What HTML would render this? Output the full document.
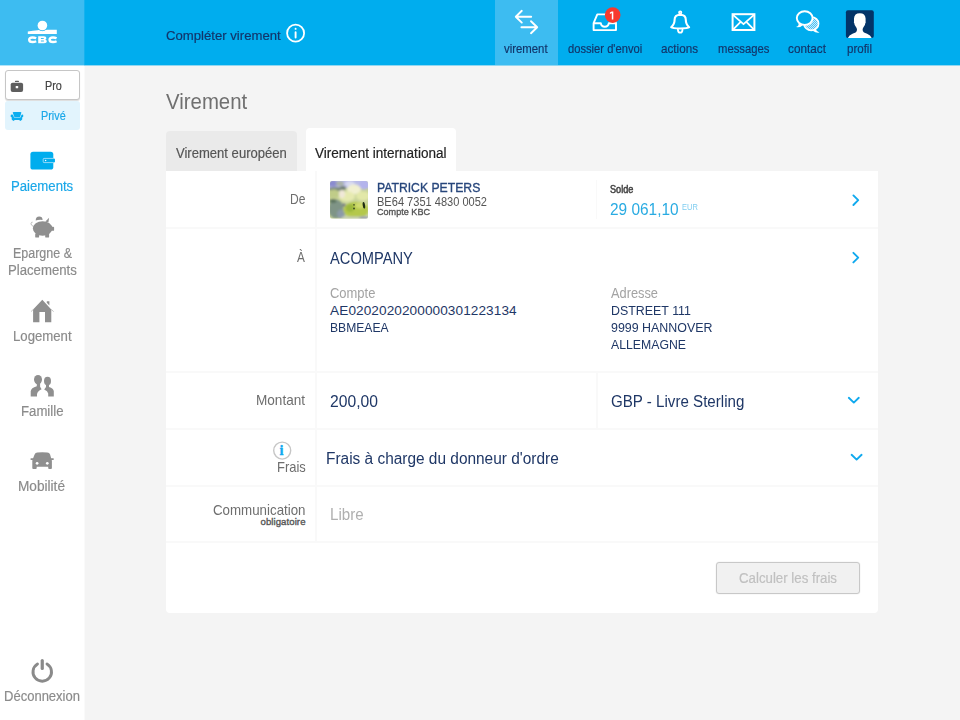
<!DOCTYPE html>
<html lang="fr">
<head>
<meta charset="utf-8">
<title>Virement</title>
<style>
*{box-sizing:border-box;margin:0;padding:0}
html,body{width:960px;height:720px;overflow:hidden}
body{font-family:"Liberation Sans",sans-serif;background:#f4f4f4;color:#1f3766;position:relative}
.a{position:absolute}
.t{position:absolute;white-space:nowrap;line-height:1;transform-origin:0 0}
svg{position:absolute;overflow:visible}
#hdr{position:absolute;left:0;top:0;width:960px;height:65px;background:#00adee}
#logo{position:absolute;left:0;top:0;width:84px;height:65px;background:#3dbcf1}
#navon{position:absolute;left:495px;top:0;width:63px;height:65px;background:#3dbcf1}
#side{position:absolute;left:0;top:65px;width:84px;height:655px;background:#fff}
#card{position:absolute;left:166px;top:171px;width:712px;height:442px;background:#fff;border-radius:0 0 4px 4px}
.hl{position:absolute;left:166px;width:712px;height:2px;background:#f9f9f9}
.vl{position:absolute;width:2px;background:#f9f9f9}
</style>
</head>
<body>
<div id="hdr"><div id="logo"></div><div id="navon"></div></div>
<div id="side"></div>
<div class="a" style="left:84px;top:65px;width:876px;height:1px;background:rgba(0,173,238,.4)"></div><div class="a" style="left:0;top:65px;width:84px;height:1px;background:rgba(61,188,241,.4)"></div><div class="a" style="left:84px;top:0;width:1px;height:65px;background:rgba(61,188,241,.35)"></div><div class="a" style="left:84px;top:66px;width:1px;height:654px;background:rgba(255,255,255,.5)"></div>

<svg style="left:0;top:0" width="85" height="65" viewBox="0 0 85 65">
  <path d="M27.8 34 L27.8 31.5 Q33 30.6 37.6 30.2 Q40 29.8 42.4 31.2 Q44.8 29.8 47.2 29.8 L56.8 29.8 L56.8 34 Z" fill="#fff"/>
  <circle cx="42.4" cy="25.5" r="5.5" fill="#3dbcf1"/>
  <circle cx="42.4" cy="25.5" r="4.8" fill="#fff"/>
  <path d="M36.2 38.3 Q34.5 37.45 32.6 37.45 Q29.2 37.45 29.2 39.75 Q29.2 42.05 32.6 42.05 Q34.5 42.05 36.2 41.2" fill="none" stroke="#fff" stroke-width="2.4"/>
  <path fill-rule="evenodd" fill="#fff" d="M38.2 36.25 H43.8 Q46.4 36.25 46.4 38.1 Q46.4 39.4 45.3 39.7 Q46.8 40 46.8 41.3 Q46.8 43.25 44.0 43.25 H38.2 Z M40.9 37.9 H43.7 V38.9 H40.9 Z M40.9 40.5 H43.9 V41.6 H40.9 Z"/>
  <path d="M56.6 38.3 Q54.9 37.45 53.0 37.45 Q49.6 37.45 49.6 39.75 Q49.6 42.05 53.0 42.05 Q54.9 42.05 56.6 41.2" fill="none" stroke="#fff" stroke-width="2.4"/>
</svg>
<svg style="left:0;top:0" width="960" height="65" viewBox="0 0 960 65" fill="none" stroke="#fff" stroke-width="1.9" stroke-linecap="round" stroke-linejoin="round">
  <!-- info -->
  <circle cx="295.6" cy="33.2" r="8.5" stroke-width="1.8"/>
  <path d="M295.6 32.2 V37.6 M295.6 28.7 V28.9" stroke-width="1.9"/>
  <!-- virement arrows -->
  <path d="M531.2 16.7 H516.2 M521.8 10.8 L515.8 16.7 L521.8 22.6"/>
  <path d="M521.4 27.2 H537 M531 21.2 L537.2 27.2 L531 33.2"/>
  <!-- dossier tray -->
  <path d="M593.6 23.2 L597.3 14.4 H612.3 L616 23.2 V30.1 H593.6 Z M593.6 23.2 H600.8 Q601.2 26.8 604.8 26.8 Q608.4 26.8 608.8 23.2 H616"/>
  <!-- bell -->
  <path d="M671.2 27.2 Q674.6 24.4 674.6 19.8 Q674.6 14.8 680.2 14.7 Q685.8 14.8 685.8 19.8 Q685.8 24.4 689.1 27.2 Q688 28.2 680.2 28.5 Q672.4 28.2 671.2 27.2 Z" stroke-width="2.1"/>
  <circle cx="680.2" cy="12.5" r="1.2" stroke-width="1.7"/>
  <path d="M677.9 29.6 Q678.1 32.7 680.2 32.7 Q682.3 32.7 682.5 29.6" stroke-width="1.8"/>
  <!-- envelope -->
  <rect x="732.6" y="14.2" width="21.8" height="15.8" stroke-width="2" stroke-linejoin="miter"/>
  <path d="M733 14.8 L743.5 24.2 L754 14.8 M733 29.6 L740.4 22.2 M754 29.6 L746.6 22.2" stroke-width="1.8"/>
</svg>
<svg style="left:0;top:0" width="960" height="65" viewBox="0 0 960 65">
  <!-- badge -->
  <circle cx="612.7" cy="15.1" r="7.8" fill="#f73a2e"/>
  <path d="M611.8 11.5 H613.3 V19.5 H611.8 V13.1 L609.9 14 V12.6 Z" fill="#fff"/>
  <!-- contact bubbles -->
  <defs><pattern id="dots" width="2" height="2" patternUnits="userSpaceOnUse"><rect width="2" height="2" fill="#4cc1f3"/><rect width="1" height="1" fill="#c9ecfc"/><rect x="1" y="1" width="1" height="1" fill="#c9ecfc"/></pattern></defs>
  <ellipse cx="811.3" cy="23.7" rx="7.3" ry="6.7" fill="url(#dots)" stroke="#fff" stroke-width="1.6"/>
  <path d="M815.6 29 Q816.6 31.6 819.5 32.5 Q816 33.2 812.8 30.8 Z" fill="#fff"/>
  <ellipse cx="804.7" cy="18.1" rx="7.9" ry="6.8" fill="#00adee" stroke="#fff" stroke-width="1.9"/>
  <path d="M799 23.2 Q798.8 26.2 796 27.1 Q799.8 27.8 802.4 25.4 Z" fill="#fff"/>
  <!-- profile -->
  <rect x="845.9" y="10.3" width="27.9" height="27.7" rx="2" fill="#033468"/>
  <path d="M847.9 38 Q849 35.4 852.5 33.8 L855.6 32.4 Q857 31.6 857 29.8 Q856.9 28 856 27 Q854.4 25.4 854.3 23.2 Q853.6 22.8 854 21.6 V18.6 Q854.3 13.2 859.8 13.2 Q865.3 13.2 865.6 18.6 V21.6 Q866 22.8 865.3 23.2 Q865.2 25.4 863.6 27 Q862.7 28 862.6 29.8 Q862.6 31.6 864 32.4 L867.1 33.8 Q870.6 35.4 871.7 38 Z" fill="#fff"/>
</svg>

<div class="a" style="left:5px;top:70px;width:75px;height:30px;background:#fff;border:1px solid #c6c6c6;border-radius:3px;box-shadow:0 1px 1px rgba(0,0,0,.14)"></div>
<div class="a" style="left:5px;top:101px;width:75px;height:29px;background:#e2f4fd;border-radius:3px"></div>
<svg style="left:0;top:0" width="85" height="720" viewBox="0 0 85 720">
  <!-- briefcase -->
  <g fill="#5e5e5e">
    <rect x="14.9" y="80.7" width="4.1" height="1.4" rx="0.7"/>
    <rect x="10.7" y="82.7" width="12.4" height="9.3" rx="1.9"/>
  </g>
  <rect x="15.7" y="85.9" width="2.5" height="2.4" rx="0.5" fill="#fff"/>
  <!-- sofa -->
  <g fill="#0badef">
    <path d="M12.7 112.6 Q12.9 111.9 13.7 111.9 H20.4 Q21.2 111.9 21.4 112.6 L20.1 116.9 H14.4 Z"/>
    <path d="M10.6 115.9 Q10.6 114.5 11.9 114.5 Q13.1 114.5 13.4 115.8 L14 117.5 H20.5 L21.1 115.8 Q21.4 114.5 22.6 114.5 Q23.3 114.5 23.3 115.9 Q23.3 117 22.2 117.3 V119.3 Q22.2 120 21.5 120 H12.4 Q11.7 120 11.7 119.3 V117.3 Q10.6 117 10.6 115.9 Z"/>
    <rect x="12.7" y="119.8" width="1.6" height="1"/><rect x="19.6" y="119.8" width="1.6" height="1"/>
  </g>
  <!-- wallet -->
  <rect x="30.4" y="151.8" width="22.9" height="17.8" rx="2.6" fill="#00adee"/>
  <rect x="43.2" y="158.4" width="11.2" height="4.2" rx="0.8" fill="#00adee" stroke="#a5ddf8" stroke-width="0.9"/>
  <rect x="53" y="158.9" width="1.9" height="3.2" fill="#00adee"/>
  <circle cx="45.6" cy="160.5" r="0.75" fill="#fff"/>
  <!-- piggy -->
  <g fill="#8f8f8f">
    <ellipse cx="42.6" cy="228.5" rx="9.7" ry="7.3"/>
    <path d="M45.4 221.6 L49.1 217.8 L48.4 222.6 Z"/>
    <rect x="50.6" y="226.8" width="3.5" height="4" rx="0.9"/>
    <rect x="35.2" y="233.6" width="3.9" height="4" rx="0.9"/>
    <rect x="45.2" y="233.6" width="3.9" height="4" rx="0.9"/>
    <path d="M35.7 220.5 Q35.7 216.6 39.2 216.6 Q42.5 216.6 42.6 220 Q39 219.5 35.7 220.5 Z"/>
  </g>
  <path d="M33.2 226.4 Q30.6 225 31 223.2 Q31.4 222 32.6 222.2" fill="none" stroke="#b4b4b4" stroke-width="0.9"/>
  <!-- house -->
  <g fill="#8f8f8f">
    <path d="M42.3 299.8 L51.3 309.5 V322.3 H45 V312.1 H39.4 V322.3 H33.1 V309.5 Z"/>
    <path d="M46.8 301.3 H49.4 V305.4 L46.8 302.8 Z"/>
  </g>
  <path d="M33.3 309.4 L31 311.6 M51.1 309.4 L53.7 311.6" stroke="#bdbdbd" stroke-width="0.9" fill="none"/>
  <!-- famille -->
  <g fill="#8f8f8f">
    <ellipse cx="38" cy="379.6" rx="4" ry="4.7"/>
    <path d="M36.8 383 V386.3 Q31 388 30.7 391.2 V396.5 H37 V394.2 Q37.4 391.4 41.6 389.3 L40.1 386.7 V383 Z"/>
    <ellipse cx="47.5" cy="381.1" rx="3.5" ry="4.3"/>
    <path d="M46 384.4 V387.1 L44.2 389.6 Q47.8 391.2 48.2 393.4 V396.5 H53.8 V391.3 Q53.6 388.6 49 387.1 V384.4 Z"/>
  </g>
  <!-- car -->
  <g fill="#8f8f8f">
    <path d="M37.4 452.6 Q42.3 452.1 47.3 452.6 Q49.4 452.8 50.1 454.4 L51.3 458.8 Q51.9 460 51.9 461 V468.1 Q51.9 469 51 469 H49.1 Q48.2 469 48.2 468.1 V466.7 H36.7 V468.1 Q36.7 469 35.8 469 H33.2 Q32.3 469 32.3 468.1 V461 Q32.3 460 32.9 458.8 L34.6 454.4 Q35.3 452.8 37.4 452.6 Z"/>
    <rect x="30.4" y="458.2" width="3.6" height="1.8" rx="0.9"/><rect x="50.4" y="458.2" width="3.5" height="1.8" rx="0.9"/>
  </g>
  <circle cx="37.1" cy="463.3" r="1.35" fill="#fff"/><circle cx="47.3" cy="463.3" r="1.35" fill="#fff"/>
  <!-- power -->
  <g fill="none" stroke="#8a8a8a" stroke-width="2.9" stroke-linecap="round">
    <path d="M37.5 664 A9.25 9.25 0 1 0 47 664"/>
    <path d="M42.25 660.5 V668.4" stroke-width="3.2"/>
  </g>
</svg>

<div class="a" style="left:166px;top:131px;width:131px;height:40px;background:#eaeaea;border-radius:4px 4px 0 0"></div>
<div class="a" style="left:306px;top:128px;width:150px;height:44px;background:#fff;border-radius:4px 4px 0 0"></div>
<div id="card"></div>
<div class="hl" style="top:227px"></div>
<div class="hl" style="top:371px"></div>
<div class="hl" style="top:428px"></div>
<div class="hl" style="top:485px"></div>
<div class="hl" style="top:541px"></div>
<div class="vl" style="left:315px;top:171px;height:370px"></div>
<div class="vl" style="left:596px;top:180px;height:39px;width:1px"></div>
<div class="vl" style="left:596px;top:373px;height:55px"></div>
<!-- avatar -->
<svg style="left:330px;top:181px" width="38" height="38" viewBox="0 0 38 38">
  <defs><clipPath id="av"><rect width="38" height="37.6" rx="2.2"/></clipPath>
  <filter id="bl" x="-20%" y="-20%" width="140%" height="140%"><feGaussianBlur stdDeviation="1.2"/></filter>
  <filter id="bs" x="-50%" y="-50%" width="200%" height="200%"><feGaussianBlur stdDeviation="0.6"/></filter></defs>
  <g clip-path="url(#av)"><rect width="38" height="38" fill="#c9d49a"/>
  <g filter="url(#bl)">
    <rect x="-2" y="-2" width="42" height="9" fill="#b9bce8"/>
    <ellipse cx="3" cy="2.5" rx="4.5" ry="3.2" fill="#8a8bcf"/>
    <ellipse cx="10" cy="2.5" rx="4" ry="2.5" fill="#aab2a8"/>
    <ellipse cx="20" cy="3" rx="5" ry="3" fill="#d8daf0"/>
    <ellipse cx="34" cy="4" rx="5" ry="4.5" fill="#b4b4ec"/>
    <ellipse cx="7" cy="8" rx="9" ry="2" fill="#7d8c7c"/>
    <ellipse cx="13" cy="6.5" rx="3" ry="1.5" fill="#6f7d70"/>
    <ellipse cx="4" cy="13" rx="5" ry="4.5" fill="#c0cc88"/>
    <ellipse cx="24" cy="8.5" rx="7" ry="5" fill="#f1f0d0"/>
    <ellipse cx="33" cy="15" rx="7" ry="4.5" fill="#e2e8a8"/>
    <ellipse cx="17" cy="15.5" rx="8" ry="5" fill="#e6eab0"/>
    <ellipse cx="12" cy="13" rx="3" ry="4" fill="#f0e8d8"/>
    <ellipse cx="6" cy="28" rx="7.5" ry="9.5" fill="#7f9486"/>
    <ellipse cx="3" cy="20" rx="3.5" ry="2" fill="#5d7460"/>
    <ellipse cx="11" cy="33" rx="4" ry="4.5" fill="#8c9aa8"/>
    <ellipse cx="26" cy="29" rx="12.5" ry="8" fill="#b4c84c"/>
    <ellipse cx="20" cy="27" rx="4" ry="4" fill="#9cb83c"/>
    <ellipse cx="30" cy="24.5" rx="5" ry="3" fill="#d0dc70"/>
    <ellipse cx="14" cy="24" rx="1.6" ry="1.6" fill="#6c6a80"/>
    <rect x="12" y="35.6" width="28" height="3" fill="#c8d0b8"/>
    <ellipse cx="34" cy="37" rx="5" ry="1.6" fill="#9a9cb8"/>
  </g>
  <g filter="url(#bs)">
    <ellipse cx="33.9" cy="24.3" rx="1.2" ry="3.3" fill="#1c2a12" transform="rotate(-8 33.9 24.3)"/>
    <circle cx="24" cy="23.8" r="0.9" fill="#4a5a28"/><circle cx="24" cy="27.6" r="1" fill="#3f4f22"/>
  </g></g>
</svg>
<!-- chevrons -->
<svg style="left:0;top:0" width="960" height="720" viewBox="0 0 960 720" fill="none" stroke="#10a9ee" stroke-width="1.9" stroke-linecap="round" stroke-linejoin="round">
  <path d="M853.4 195.4 L858.2 200.2 L853.4 205"/>
  <path d="M853.4 252.8 L858.2 257.6 L853.4 262.4"/>
  <path d="M848.8 397.8 L853.8 402.6 L858.8 397.8"/>
  <path d="M851.6 454.8 L856.6 459.6 L861.6 454.8"/>
  <circle cx="282.2" cy="450.6" r="8.5" stroke="#c6c6c6" stroke-width="1.4"/>
</svg>
<div class="t" style="left:279.6px;top:443.4px;font-family:'Liberation Serif',serif;font-weight:700;font-size:14.5px;color:#12a9ef;-webkit-text-stroke:0.3px #12a9ef">i</div>
<!-- button -->
<div class="a" style="left:716px;top:562px;width:144px;height:32px;background:#f1f1f1;border:1px solid #c8c8c8;border-radius:3px;box-shadow:0 0 0 .5px rgba(0,0,0,.05)"></div>
<div class="t" style="left:166.0px;top:28px;line-height:15px;font-size:13.6px;color:#12356a;transform:scaleX(0.9670);-webkit-text-stroke:0.18px #12356a">Compléter virement</div>
<div class="t" style="left:504.4px;top:41px;line-height:15px;font-size:12.8px;color:#12356a;transform:scaleX(0.8884);-webkit-text-stroke:0.18px #12356a">virement</div>
<div class="t" style="left:567.5px;top:41px;line-height:15px;font-size:12.8px;color:#12356a;transform:scaleX(0.8733);-webkit-text-stroke:0.18px #12356a">dossier d'envoi</div>
<div class="t" style="left:661.0px;top:41px;line-height:15px;font-size:12.8px;color:#12356a;transform:scaleX(0.9125);-webkit-text-stroke:0.18px #12356a">actions</div>
<div class="t" style="left:717.7px;top:41px;line-height:15px;font-size:12.8px;color:#12356a;transform:scaleX(0.8795);-webkit-text-stroke:0.18px #12356a">messages</div>
<div class="t" style="left:788.0px;top:41px;line-height:15px;font-size:12.8px;color:#12356a;transform:scaleX(0.9184);-webkit-text-stroke:0.18px #12356a">contact</div>
<div class="t" style="left:846.7px;top:41px;line-height:15px;font-size:12.8px;color:#12356a;transform:scaleX(0.9009);-webkit-text-stroke:0.18px #12356a">profil</div>
<div class="t" style="left:44.7px;top:79px;line-height:14px;font-size:12.2px;color:#444;transform:scaleX(0.8909);-webkit-text-stroke:0.18px #444">Pro</div>
<div class="t" style="left:41.0px;top:109px;line-height:14px;font-size:12.2px;color:#1aa7e8;transform:scaleX(0.8891);-webkit-text-stroke:0.18px #1aa7e8">Privé</div>
<div class="t" style="left:11.0px;top:179px;line-height:15px;font-size:13.8px;color:#1aa7e8;transform:scaleX(0.9542);-webkit-text-stroke:0.18px #1aa7e8">Paiements</div>
<div class="t" style="left:12.6px;top:246px;line-height:15px;font-size:13.8px;color:#8b8b8b;transform:scaleX(0.9049);-webkit-text-stroke:0.18px #8b8b8b">Epargne &amp;</div>
<div class="t" style="left:7.6px;top:263px;line-height:15px;font-size:13.8px;color:#8b8b8b;transform:scaleX(0.9543);-webkit-text-stroke:0.18px #8b8b8b">Placements</div>
<div class="t" style="left:12.6px;top:329px;line-height:15px;font-size:13.8px;color:#8b8b8b;transform:scaleX(0.9548);-webkit-text-stroke:0.18px #8b8b8b">Logement</div>
<div class="t" style="left:20.7px;top:404px;line-height:15px;font-size:13.8px;color:#8b8b8b;transform:scaleX(0.9557);-webkit-text-stroke:0.18px #8b8b8b">Famille</div>
<div class="t" style="left:18.2px;top:479px;line-height:15px;font-size:13.8px;color:#8b8b8b;transform:scaleX(0.9885);-webkit-text-stroke:0.18px #8b8b8b">Mobilité</div>
<div class="t" style="left:3.7px;top:689px;line-height:15px;font-size:13.8px;color:#8b8b8b;transform:scaleX(0.9435);-webkit-text-stroke:0.18px #8b8b8b">Déconnexion</div>
<div class="t" style="left:166.3px;top:90px;line-height:24px;font-size:21.3px;color:#707070;transform:scaleX(0.9571)">Virement</div>
<div class="t" style="left:175.7px;top:146px;line-height:15px;font-size:13.8px;color:#555;transform:scaleX(0.9461);-webkit-text-stroke:0.18px #555">Virement européen</div>
<div class="t" style="left:314.7px;top:146px;line-height:15px;font-size:13.8px;color:#222;transform:scaleX(0.9816);-webkit-text-stroke:0.18px #222">Virement international</div>
<div class="t" style="left:290.3px;top:191px;line-height:16px;font-size:14.3px;color:#6e6e6e;transform:scaleX(0.8424)">De</div>
<div class="t" style="left:377.2px;top:180px;line-height:15px;font-size:13.0px;color:#27467c;transform:scaleX(0.9387);-webkit-text-stroke:0.35px #27467c">PATRICK PETERS</div>
<div class="t" style="left:377.2px;top:195px;line-height:14px;font-size:12.2px;color:#555;transform:scaleX(0.9067)">BE64 7351 4830 0052</div>
<div class="t" style="left:377.2px;top:206px;line-height:11px;font-size:9.8px;color:#555;transform:scaleX(0.9270);-webkit-text-stroke:0.35px #555">Compte KBC</div>
<div class="t" style="left:610.1px;top:184px;line-height:11px;font-size:10.2px;color:#444;transform:scaleX(0.8978);-webkit-text-stroke:0.5px #444">Solde</div>
<div class="t" style="left:610.1px;top:200px;line-height:19px;font-size:17.0px;color:#29abe2;transform:scaleX(0.9069)">29 061,10</div>
<div class="t" style="left:682.2px;top:202px;line-height:10px;font-size:8.6px;color:#7fcdf0;transform:scaleX(0.8702)">EUR</div>
<div class="t" style="left:297.2px;top:249px;line-height:16px;font-size:14.3px;color:#6e6e6e;transform:scaleX(0.8275)">À</div>
<div class="t" style="left:330.1px;top:250px;line-height:17px;font-size:15.6px;color:#1f3766;transform:scaleX(0.9410)">ACOMPANY</div>
<div class="t" style="left:330.1px;top:285px;line-height:16px;font-size:14.0px;color:#a3a3a3;transform:scaleX(0.9259)">Compte</div>
<div class="t" style="left:330.1px;top:303px;line-height:15px;font-size:13.6px;color:#1f3766;letter-spacing:0.09px">AE0202020200000301223134</div>
<div class="t" style="left:330.1px;top:320px;line-height:15px;font-size:13.6px;color:#1f3766;transform:scaleX(0.8915)">BBMEAEA</div>
<div class="t" style="left:610.7px;top:285px;line-height:16px;font-size:14.0px;color:#a3a3a3;transform:scaleX(0.9151)">Adresse</div>
<div class="t" style="left:610.7px;top:303px;line-height:15px;font-size:13.6px;color:#1f3766;transform:scaleX(0.9128)">DSTREET 111</div>
<div class="t" style="left:610.7px;top:320px;line-height:15px;font-size:13.6px;color:#1f3766;transform:scaleX(0.9139)">9999 HANNOVER</div>
<div class="t" style="left:610.7px;top:337px;line-height:15px;font-size:13.6px;color:#1f3766;transform:scaleX(0.9024)">ALLEMAGNE</div>
<div class="t" style="left:256.4px;top:392px;line-height:16px;font-size:14.3px;color:#6e6e6e;transform:scaleX(0.9502)">Montant</div>
<div class="t" style="left:330.1px;top:393px;line-height:17px;font-size:16.0px;color:#1f3766;transform:scaleX(0.9788)">200,00</div>
<div class="t" style="left:611.0px;top:393px;line-height:17px;font-size:16.0px;color:#1f3766;transform:scaleX(0.9448)">GBP - Livre Sterling</div>
<div class="t" style="left:276.7px;top:459px;line-height:16px;font-size:14.3px;color:#6e6e6e;transform:scaleX(0.9062)">Frais</div>
<div class="t" style="left:326.0px;top:450px;line-height:17px;font-size:16.0px;color:#1f3766;transform:scaleX(0.9639)">Frais à charge du donneur d'ordre</div>
<div class="t" style="left:213.0px;top:502px;line-height:16px;font-size:14.3px;color:#6e6e6e;transform:scaleX(0.9313)">Communication</div>
<div class="t" style="left:260.5px;top:516px;line-height:11px;font-size:9.6px;color:#555;letter-spacing:0.07px;-webkit-text-stroke:0.35px #555">obligatoire</div>
<div class="t" style="left:330.1px;top:506px;line-height:17px;font-size:16.0px;color:#b0b0b0;transform:scaleX(0.9444)">Libre</div>
<div class="t" style="left:738.7px;top:571px;line-height:15px;font-size:13.8px;color:#c0c0c0;transform:scaleX(0.9609);-webkit-text-stroke:0.18px #c0c0c0">Calculer les frais</div>
</body>
</html>
